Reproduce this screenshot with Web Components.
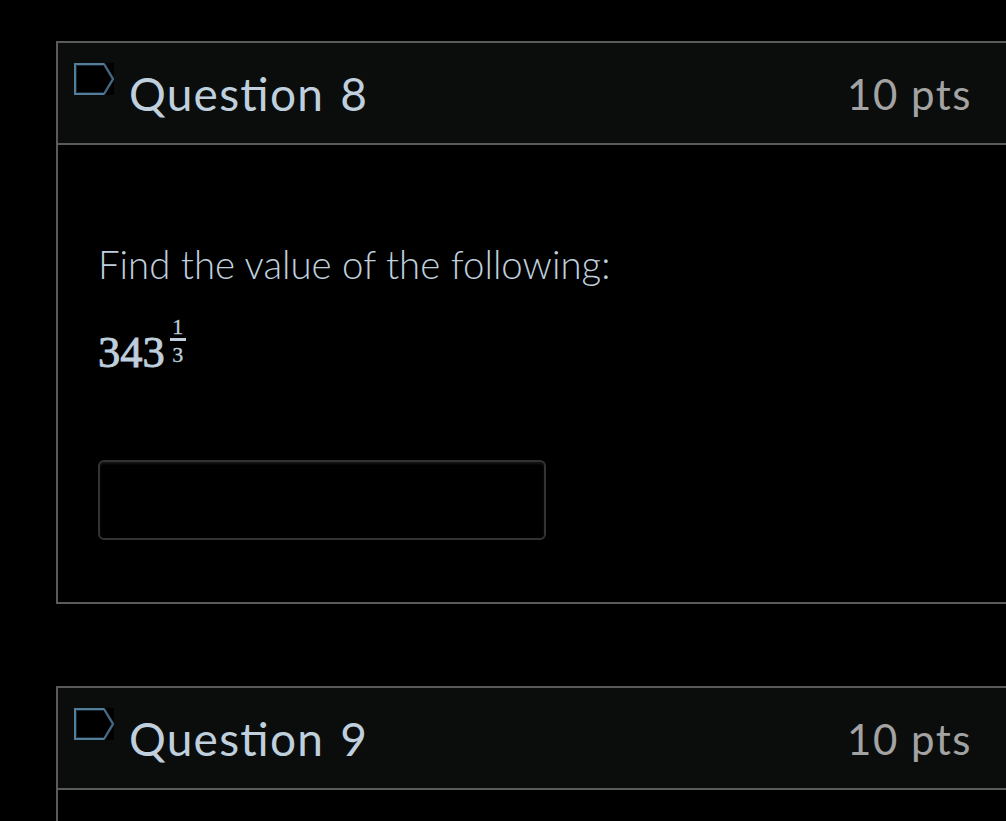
<!DOCTYPE html>
<html lang="en">
<head>
<meta charset="utf-8">
<title>Quiz</title>
<style>
  html, body {
    margin: 0;
    height: 100%;
    background: #000;
  }
  body {
    overflow: hidden;
    color: #bfcfdd;
    font-family: Lato, sans-serif;
  }
</style>
</head>
<body>
<quiz-page>
  <quiz-question name="Question 8" points="10 pts">
    <p>Find the value of the following:</p>
    <math-power base="343" top="1" bottom="3"></math-power>
    <answer-box></answer-box>
  </quiz-question>
  <quiz-question name="Question 9" points="10 pts"></quiz-question>
</quiz-page>

<script>
class QuizPage extends HTMLElement {
  connectedCallback() {
    this.attachShadow({ mode: 'open' });
    this.shadowRoot.innerHTML = `
      <style>
        :host {
          display: flex;
          flex-direction: column;
          gap: 82px;
          box-sizing: border-box;
          height: 821px;
          padding: 41px 0 0 56px;
          overflow: hidden;
        }
      </style>
      <slot></slot>
    `;
  }
}

class FlagMarker extends HTMLElement {
  connectedCallback() {
    this.attachShadow({ mode: 'open' });
    this.shadowRoot.innerHTML = `
      <style>
        :host {
          display: block;
          width: 40px;
          height: 32px;
          background: #000;
        }
        svg { display: block; }
      </style>
      <svg width="40" height="32" viewBox="0 0 40 32" fill="none">
        <path d="M30 1L39 16L30 31" stroke="#456882" stroke-width="2.4"/>
        <path d="M30.5 1H1V31H30.5" stroke="#527d9b" stroke-width="2"/>
        <path d="M29 2.5H2.5V29.5H29" stroke="#1a2831"/>
      </svg>
    `;
  }
}

class QuizQuestion extends HTMLElement {
  connectedCallback() {
    this.attachShadow({ mode: 'open' });
    this.shadowRoot.innerHTML = `
      <style>
        :host {
          display: block;
          flex: none;
          box-sizing: border-box;
          height: 563px;
          border: 2px solid #5a5a5a;
          border-right: 0;
        }
        header {
          display: flex;
          align-items: flex-start;
          box-sizing: border-box;
          height: 102px;
          padding: 20px 34px 0 16px;
          background: #0a0d0c;
          border-bottom: 2px solid #5a5a5a;
        }
        h2, .points {
          margin: 3px 0 0;
          font-weight: 400;
          line-height: 56px;
          white-space: nowrap;
        }
        h2 {
          margin-left: 15px;
          font-size: 46px;
          letter-spacing: 1.25px;
          word-spacing: 3px;
          font-feature-settings: "liga" 1;
        }
        .points {
          margin-left: auto;
          color: #a3a3a3;
          font-size: 42px;
          letter-spacing: 1.5px;
        }
        .body {
          display: flex;
          flex-direction: column;
          align-items: flex-start;
          padding: 95px 0 0 40px;
        }
        ::slotted(p) {
          margin: 0;
          font-size: 38.4px;
          font-weight: 300;
          line-height: 48px;
          white-space: nowrap;
        }
      </style>
      <header>
        <flag-marker></flag-marker>
        <h2>${this.getAttribute('name')}</h2>
        <span class="points">${this.getAttribute('points')}</span>
      </header>
      <div class="body"><slot></slot></div>
    `;
  }
}

class MathPower extends HTMLElement {
  connectedCallback() {
    this.attachShadow({ mode: 'open' });
    this.shadowRoot.innerHTML = `
      <style>
        :host {
          display: flex;
          align-items: flex-start;
          height: 84px;
          margin-top: 28px;
          font-family: "Liberation Serif", serif;
        }
        .base {
          margin: 12px 0 0;
          font-size: 44.5px;
          line-height: 48px;
          -webkit-text-stroke: 0.9px currentColor;
        }
        .frac {
          display: flex;
          flex-direction: column;
          align-items: center;
          width: 16px;
          margin-left: 5px;
          font-size: 22px;
          line-height: 22px;
          -webkit-text-stroke: 0.3px currentColor;
        }
        .bar {
          width: 16px;
          height: 3px;
          margin: 0 0 3px;
          background: currentColor;
        }
      </style>
      <span class="base">${this.getAttribute('base')}</span>
      <span class="frac">
        <span>${this.getAttribute('top')}</span>
        <span class="bar"></span>
        <span>${this.getAttribute('bottom')}</span>
      </span>
    `;
  }
}

class AnswerBox extends HTMLElement {
  connectedCallback() {
    this.attachShadow({ mode: 'open' });
    this.shadowRoot.innerHTML = `
      <style>
        :host {
          display: block;
          margin-top: 60px;
        }
        input {
          display: block;
          box-sizing: border-box;
          width: 448px;
          height: 80px;
          padding: 0 16px;
          border: 2px solid #333;
          border-radius: 6px;
          outline: 0;
          background: #000;
          color: inherit;
          font: 300 38.4px Lato, sans-serif;
          box-shadow: inset 0 2px 2px #151515;
        }
      </style>
      <input type="text" aria-label="Answer">
    `;
  }
}

customElements.define('quiz-page', QuizPage);
customElements.define('flag-marker', FlagMarker);
customElements.define('quiz-question', QuizQuestion);
customElements.define('math-power', MathPower);
customElements.define('answer-box', AnswerBox);
</script>
</body>
</html>
